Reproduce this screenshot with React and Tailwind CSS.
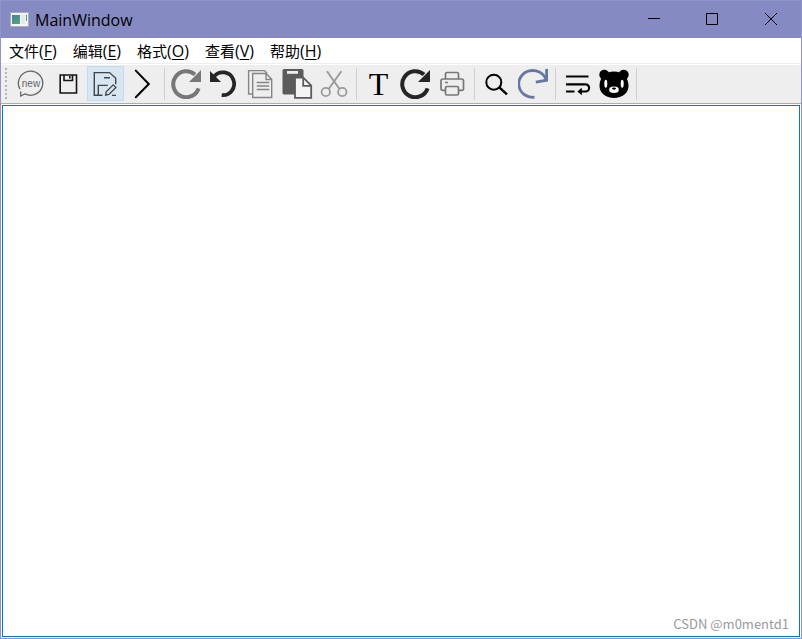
import React from 'react';

const menus = [
    { label: '文件', accessKey: 'F' },
    { label: '编辑', accessKey: 'E' },
    { label: '格式', accessKey: 'O' },
    { label: '查看', accessKey: 'V' },
    { label: '帮助', accessKey: 'H' },
];

const Icon = ({ children, className = 'text-black' }) => (
    <svg viewBox="0 0 31 31" width="31" height="31" fill="none" stroke="currentColor" className={className} aria-hidden="true">
        {children}
    </svg>
);

const NewIcon = () => (
    <Icon className="text-[#62656a]">
        <path d="M4.7 23.5V28l4.3-2.1A12.2 12 0 1 0 4 21.2" strokeWidth="1.3" />
        <text x="15" y="18.5" textAnchor="middle" fontSize="10" stroke="none" fill="currentColor" className="font-['Liberation_Sans',sans-serif] font-normal">new</text>
    </Icon>
);

const SaveIcon = () => (
    <Icon className="text-[#151515]">
        <path d="M7.2 7h16.3v18H7.2zM11 7v5.5h8.5V7" strokeWidth="1.6" />
        <path d="M16.8 8v2.6" strokeWidth="1.6" />
    </Icon>
);

const SaveAsIcon = () => (
    <Icon className="text-[#3f464c]">
        <path d="M12.5 27.2H4.3V4.6h15.2l6.2 5.6v6M8.3 27V17.4h9.5M14 9.8h6" strokeWidth="1.4" />
        <path d="M15.6 27.2l.6-3.4 7-7 2.7 2.6-7 7zM22 27.4h4" strokeWidth="1.3" />
    </Icon>
);

const ChevronIcon = () => (
    <Icon>
        <path d="M8.8 2.6L21.8 16 8.8 29.2" strokeWidth="2" strokeLinecap="round" />
    </Icon>
);

const RefreshIcon = ({ className }) => (
    <Icon className={className}>
        <path d="M24 6.6A13 13 0 1 0 27.6 20.3" strokeWidth="4" />
        <path d="M30 2v12H18z" fill="currentColor" stroke="none" />
    </Icon>
);

const UndoIcon = () => (
    <Icon className="text-[#252525]">
        <path d="M6 8.4A11.4 11.4 0 1 1 13.7 27.1" strokeWidth="3.8" />
        <path d="M2 3v11h11z" fill="currentColor" stroke="none" />
    </Icon>
);

const CopyIcon = () => (
    <Icon className="text-[#858585]">
        <path d="M7.5 26H3.6V2.6H19.5l2.5 2.6" strokeWidth="1.4" />
        <path d="M7.7 5.5h13.5l5.5 5.8V29.5h-19zM21 5.5v6h5.7M11.7 14.5h12.6M11.7 18h12.6M11.7 21.5h12.6" strokeWidth="1.4" />
    </Icon>
);

const PasteIcon = () => (
    <Icon className="text-[#5b5b5b]">
        <path d="M2 1h18a1.5 1.5 0 0 1 1.5 1.5V10H13v16.500H2A1.500 1.500 0 0 1 .5 25V2.500A1.500 1.500 0 0 1 2 1z" fill="currentColor" stroke="none" />
        <path d="M5 3h11v2.800H5z" fill="#eee" stroke="none" />
        <path d="M13 9.700h8.300l7.900 7.900v12.200H13z" fill="#f4f4f4" strokeWidth="1.800" />
        <path d="M21.200 10v7.800H29" strokeWidth="1.800" />
    </Icon>
);

const CutIcon = () => (
    <Icon className="text-[#9a9a9a]">
        <path d="M8 3.3L20.500 21M22.300 3.300L9.700 21" strokeWidth="1.900" />
        <circle cx="6.800" cy="24" r="4.200" strokeWidth="1.800" />
        <circle cx="23.300" cy="24" r="4.200" strokeWidth="1.800" />
    </Icon>
);

const FontIcon = () => (
    <span className="block text-[32px] leading-[34px] text-black font-['Liberation_Serif',serif]" aria-hidden="true">T</span>
);

const PrintIcon = () => (
    <Icon className="text-[#777]">
        <path d="M8.500 11V6A1.500 1.500 0 0 1 10 4.500h10A1.500 1.500 0 0 1 21.500 6v5" strokeWidth="1.700" />
        <path d="M8.500 22.300H5.500A1.500 1.500 0 0 1 4 20.800V13a2 2 0 0 1 2-2h18.500a2 2 0 0 1 2 2v7.800a1.500 1.500 0 0 1-1.500 1.500h-3.500M8 14.500h3" strokeWidth="1.700" />
        <rect x="8.500" y="18.500" width="13" height="8.500" rx="1.500" strokeWidth="1.700" />
    </Icon>
);

const SearchIcon = () => (
    <Icon>
        <circle cx="12.800" cy="14.200" r="7.500" strokeWidth="2" />
        <path d="M18.300 19.400l7.700 7" strokeWidth="2.400" />
    </Icon>
);

const RedoIcon = () => (
    <Icon className="text-[#6577a3]">
        <path d="M16.500 29.200A14 13.400 0 1 1 28 11.500" strokeWidth="2.800" />
        <path d="M28.600 1v11.200l-10.800 1.900" strokeWidth="2.800" />
    </Icon>
);

const WrapIcon = () => (
    <Icon>
        <path d="M4 8.500h22.500M4 16.300h19.500a3.500 3.500 0 0 1 0 7.200H18M4 23.500h8.500" strokeWidth="2.200" />
        <path d="M15.300 23.500l4.500-3.700v7.400z" fill="currentColor" stroke="none" />
    </Icon>
);

const BearIcon = () => (
    <Icon>
        <g fill="currentColor" stroke="none">
            <circle cx="5.300" cy="6.800" r="5" />
            <circle cx="24.700" cy="6.800" r="5" />
            <path d="M15 3.500c8.500 0 14 5.500 14.500 13.500C30 25 23 30 15 30S0 25 .5 17C1 9 6.500 3.500 15 3.500z" />
        </g>
        <g fill="#fff" stroke="none">
            <ellipse cx="6.800" cy="15.800" rx="1.500" ry="4" />
            <ellipse cx="23.200" cy="15.800" rx="1.500" ry="4" />
            <ellipse cx="15" cy="21.800" rx="4.800" ry="3.300" />
        </g>
        <ellipse cx="15" cy="20.600" rx="2" ry="1.100" fill="currentColor" stroke="none" />
    </Icon>
);

const toolGroups = [
    [
        { name: 'New', icon: <NewIcon /> },
        { name: 'Save', icon: <SaveIcon /> },
        { name: 'Save as', icon: <SaveAsIcon />, active: true },
        { name: 'Exit', icon: <ChevronIcon /> },
    ],
    [
        { name: 'Redo', icon: <RefreshIcon className="text-[#777]" /> },
        { name: 'Undo', icon: <UndoIcon /> },
        { name: 'Copy', icon: <CopyIcon /> },
        { name: 'Paste', icon: <PasteIcon /> },
        { name: 'Cut', icon: <CutIcon /> },
    ],
    [
        { name: 'Font', icon: <FontIcon /> },
        { name: 'Rotate', icon: <RefreshIcon className="text-[#252525]" /> },
        { name: 'Print', icon: <PrintIcon /> },
    ],
    [
        { name: 'Find', icon: <SearchIcon /> },
        { name: 'Replace', icon: <RedoIcon /> },
    ],
    [
        { name: 'Word wrap', icon: <WrapIcon /> },
        { name: 'About', icon: <BearIcon /> },
    ],
];

const TitleBar = () => (
    <header className="h-[37px] flex items-center bg-[#868ac3] text-black">
        <svg viewBox="0 0 19 15" width="19" height="15" className="ml-[9px]" aria-hidden="true">
            <defs>
                <linearGradient id="pane" x1="0" y1="0" x2="1" y2="1">
                    <stop offset="0" stopColor="#4580a0" />
                    <stop offset="1" stopColor="#55a878" />
                </linearGradient>
            </defs>
            <rect x=".5" y=".5" width="18" height="14" fill="#f6f6f6" stroke="#a9adb5" />
            <rect x="2" y="3" width="8" height="9" fill="url(#pane)" />
            <rect x="11" y="3" width="4" height="9" fill="#e4e8ea" />
            <rect x="16" y="3" width="1" height="6" fill="#4f9a88" />
        </svg>
        <h1 className="flex-1 ml-1.5 text-base leading-5 font-['Open_Sans',sans-serif]">MainWindow</h1>
        <button type="button" aria-label="Minimize" className="w-[58px] h-full pb-px flex items-center justify-center">
            <svg viewBox="0 0 12 12" width="12" height="12" stroke="currentColor"><path d="M0 5.500h12" /></svg>
        </button>
        <button type="button" aria-label="Maximize" className="w-[58px] h-full pb-px flex items-center justify-center">
            <svg viewBox="0 0 12 12" width="12" height="12" fill="none" stroke="currentColor"><path d="M.5.500h11v11H.5z" /></svg>
        </button>
        <button type="button" aria-label="Close" className="w-[60px] h-full pb-px flex items-center justify-center">
            <svg viewBox="0 0 12 12" width="12" height="12" stroke="currentColor"><path d="M0 0l12 12M12 0L0 12" /></svg>
        </button>
    </header>
);

const MenuBar = () => (
    <nav className="h-[25px] flex items-center bg-white text-black text-[15px] leading-5 font-['Open_Sans','Noto_Sans_CJK_SC',sans-serif]">
        {menus.map((menu) => (
            <button key={menu.accessKey} type="button" className="px-2">
                {menu.label}
                <span className="text-base leading-5">
                    (<span className="underline underline-offset-2">{menu.accessKey}</span>)
                </span>
            </button>
        ))}
    </nav>
);

const ToolBar = () => (
    <div role="toolbar" className="h-[38px] pt-px flex items-start bg-[#eee]">
        {/* Drag handle */}
        <div className="w-3 h-[35px] py-0.5 pl-1 flex flex-col justify-between">
            {Array.from({ length: 8 }, (_, i) => (
                <span key={i} className="block size-0.5 bg-[#b4b4b4]"></span>
            ))}
        </div>
        {toolGroups.map((group, i) => (
            <div key={i} className="flex items-center">
                {group.map((tool) => (
                    <button
                        key={tool.name}
                        type="button"
                        aria-label={tool.name}
                        className={tool.active
                            ? 'w-[37px] h-[35px] flex items-center justify-center border border-[#c0dcf3] bg-[#d8e6f2]'
                            : 'w-[37px] h-[35px] flex items-center justify-center'}
                    >
                        <span className="shrink-0">{tool.icon}</span>
                    </button>
                ))}
                <span className="w-px h-8 mx-[3px] bg-[#d0d0d0]"></span>
            </div>
        ))}
    </div>
);

const App = () => (
    <div className="min-h-screen flex flex-col border border-[#9094c8] bg-white">
        <TitleBar />
        <MenuBar />
        <div className="h-px bg-[#eee]"></div>
        <div className="pt-px border-b border-[#adadad]">
            <ToolBar />
        </div>
        <main className="relative flex-1 flex p-px">
            <textarea
                aria-label="Editor"
                className="flex-1 resize-none border border-[#0078d7] bg-white p-1 text-[15px] outline-none font-['Noto_Sans','Noto_Sans_CJK_SC',sans-serif]"
            ></textarea>
            <span className="absolute right-3 bottom-1 text-[13px] leading-5 text-[#999] font-['Noto_Sans_CJK_SC',sans-serif]">CSDN @m0mentd1</span>
        </main>
    </div>
);

export default App;
